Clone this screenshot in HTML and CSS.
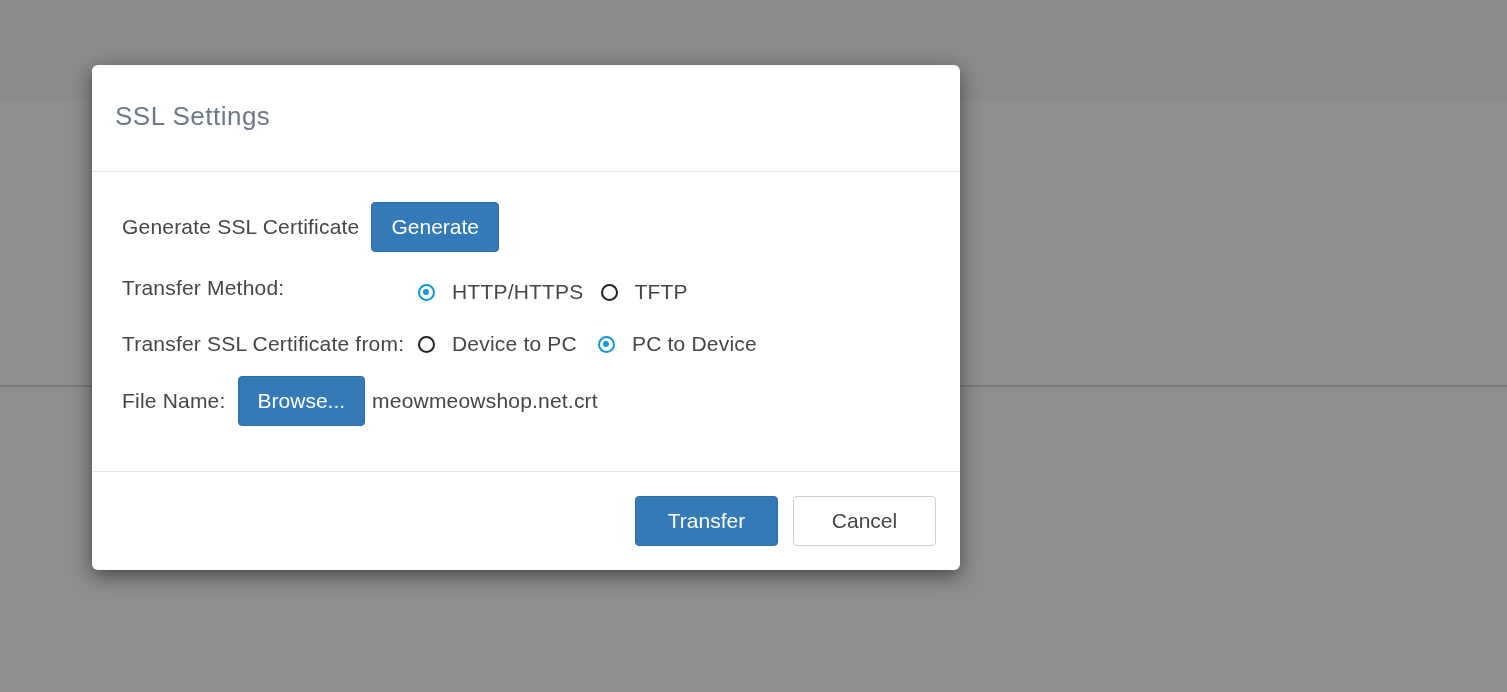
FILE: index.html
```html
<!DOCTYPE html>
<html lang="en">
<head>
    <meta charset="UTF-8">
    <meta name="viewport" content="width=device-width, initial-scale=1.0">
    <title>SSL Settings</title>
    <link rel="stylesheet" href="styles.css">
</head>
<body>
    <!-- Page behind the modal backdrop -->
    <div class="page">
        <div class="page-top"></div>
        <div class="page-main"></div>
        <div class="page-rule"></div>
    </div>

    <div class="backdrop">
        <div class="modal">
            <div class="modal-header">
                <h2 class="modal-title">SSL Settings</h2>
            </div>

            <div class="modal-body">
                <div class="row row-generate">
                    <span class="label">Generate SSL Certificate</span>
                    <button class="btn btn-primary">Generate</button>
                </div>

                <div class="row row-method">
                    <span class="label label-wide">Transfer Method:</span>
                    <label class="option"><span class="radio checked"></span>HTTP/HTTPS</label>
                    <label class="option"><span class="radio"></span>TFTP</label>
                </div>

                <div class="row row-from">
                    <span class="label label-wide">Transfer SSL Certificate from:</span>
                    <label class="option"><span class="radio"></span>Device to PC</label>
                    <label class="option"><span class="radio checked"></span>PC to Device</label>
                </div>

                <div class="row row-file">
                    <span class="label">File Name:</span>
                    <button class="btn btn-primary btn-browse">Browse...</button>
                    <span class="file-name">meowmeowshop.net.crt</span>
                </div>
            </div>

            <div class="modal-footer">
                <button class="btn btn-primary btn-wide">Transfer</button>
                <button class="btn btn-default btn-wide">Cancel</button>
            </div>
        </div>
    </div>
</body>
</html>
```

FILE: styles.css
```css
body {
    margin: 0;
    font-family: "Liberation Sans", Arial, sans-serif;
    color: #464646;
    background-color: #8e8e8e;
    overflow: hidden;
}
.page {
    height: 692px;
    display: flex;
    flex-direction: column;
}
.page-top {
    height: 99px;
    background-color: #8b8b8b;
}
.page-main {
    height: 286px;
    background-color: #8e8e8e;
}
.page-rule {
    height: 2px;
    background-color: #7b7b7b;
}
.backdrop {
    position: fixed;
    left: 0;
    top: 0;
    width: 100%;
    height: 100%;
}
.modal {
    position: absolute;
    left: 92px;
    top: 65px;
    width: 868px;
    background-color: #ffffff;
    border-radius: 6px;
    box-shadow: 0 6px 20px rgba(0, 0, 0, 0.5);
}
.modal-header {
    height: 106px;
    padding: 0 23px;
    border-bottom: 1px solid #e5e5e5;
    display: flex;
    align-items: center;
}
.modal-title {
    margin: 0 0 4px 0;
    font-size: 26px;
    font-weight: normal;
    color: #6c7a8b;
    letter-spacing: 0.5px;
}
.modal-body {
    padding: 30px 30px 45px 30px;
    border-bottom: 1px solid #e5e5e5;
}
.row {
    display: flex;
    align-items: center;
    font-size: 21px;
    letter-spacing: 0.2px;
}
.row-generate {
    height: 50px;
}
.row-method {
    height: 30px;
    margin-top: 24px;
}
.row-from {
    height: 30px;
    margin-top: 23px;
}
.row-file {
    height: 50px;
    margin-top: 17px;
}
.label {
    margin-right: 12px;
}
.row-method .label-wide {
    margin-top: -6px;
}
.label-wide {
    width: 296px;
    margin-right: 0;
}
.row-method .option {
    margin-top: 2px;
    margin-right: 17px;
}
.option {
    display: flex;
    align-items: center;
    margin-right: 21px;
}
.radio {
    box-sizing: border-box;
    width: 17px;
    height: 17px;
    border: 2.5px solid #222;
    border-radius: 50%;
    margin-right: 17px;
    position: relative;
}
.radio.checked {
    border-color: #0d9ad6;
}
.radio.checked::after {
    content: "";
    position: absolute;
    left: 3px;
    top: 3px;
    width: 6px;
    height: 6px;
    border-radius: 50%;
    background-color: #0d9ad6;
}
.btn {
    height: 50px;
    padding: 0 19px;
    font-family: inherit;
    font-size: 21px;
    border-radius: 4px;
    cursor: pointer;
}
.btn-primary {
    background-color: #337ab7;
    border: 1px solid #2e6da4;
    color: #ffffff;
}
.btn-default {
    background-color: #ffffff;
    border: 1px solid #cfcfcf;
    color: #464646;
}
.btn-browse {
    margin-right: 7px;
}
.btn-wide {
    width: 143px;
}
.modal-footer {
    display: flex;
    justify-content: flex-end;
    gap: 15px;
    padding: 24px 24px 24px 24px;
}
```
